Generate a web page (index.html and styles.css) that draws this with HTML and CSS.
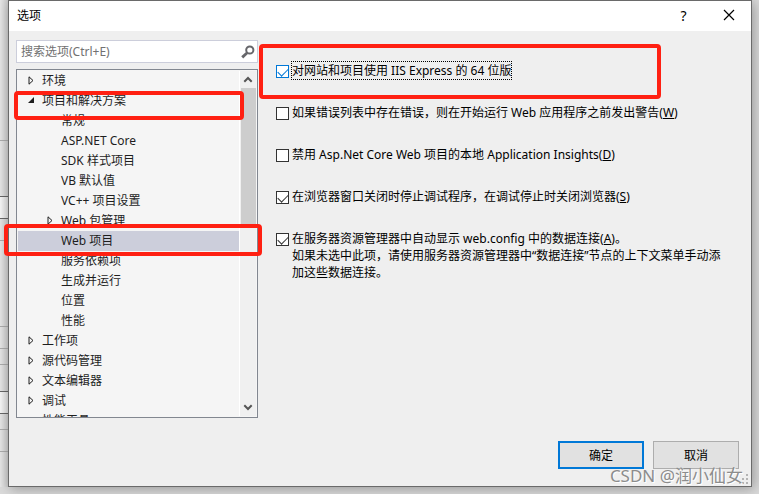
FILE: index.html
```html
<!DOCTYPE html>
<html lang="zh-CN">
<head>
  <meta charset="UTF-8">
  <title>选项</title>
  <meta name="viewport" content="width=device-width, initial-scale=1.0">
  <link rel="stylesheet" href="styles.css">
</head>
<body>

  <!-- edge of the window behind the dialog -->
  <div class="behind">
    <div class="strip strip-top"></div>
    <div class="strip strip-gap"></div>
    <div class="strip strip-field"></div>
    <div class="strip strip-row"></div>
    <div class="strip strip-tall"></div>
    <div class="strip strip-row"></div>
    <div class="strip strip-small"></div>
    <div class="strip strip-low"></div>
    <div class="strip strip-field"></div>
    <div class="strip strip-small"></div>
    <div class="strip strip-row"></div>
  </div>

  <div class="dialog" role="dialog" aria-labelledby="title">
    <header class="title-bar">
      <h1 id="title">选项</h1>
      <button type="button" class="title-btn">?</button>
      <button type="button" class="title-btn" aria-label="关闭">
        <svg width="12" height="12" viewBox="0 0 12 12"><path d="M1 1L11 11M11 1L1 11" stroke="#000" stroke-width="1.2" fill="none"/></svg>
      </button>
    </header>

    <div class="content">
      <div class="sidebar">
        <div class="search">
          <input type="text" placeholder="搜索选项(Ctrl+E)" aria-label="搜索选项">
          <svg width="14" height="14" viewBox="0 0 14 14" fill="none" stroke="#66666a"><circle cx="8.8" cy="5" r="3.6" stroke-width="2"/><path d="M6.2 7.8L1.2 12.4" stroke-width="2.8"/></svg>
        </div>

        <div class="tree-box">
          <ul class="tree" role="tree">
            <li><svg class="arrow" viewBox="0 0 6 9"><path d="M1 .8V8.2L5 4.5Z"/></svg>环境</li>
            <li><svg class="arrow open" viewBox="0 0 6 6"><path d="M6 0V6H0Z"/></svg>项目和解决方案</li>
            <li class="child">常规</li>
            <li class="child">ASP.NET Core</li>
            <li class="child">SDK 样式项目</li>
            <li class="child">VB 默认值</li>
            <li class="child">VC++ 项目设置</li>
            <li class="child"><svg class="arrow" viewBox="0 0 6 9"><path d="M1 .8V8.2L5 4.5Z"/></svg>Web 包管理</li>
            <li class="child selected">Web 项目</li>
            <li class="child">服务依赖项</li>
            <li class="child">生成并运行</li>
            <li class="child">位置</li>
            <li class="child">性能</li>
            <li><svg class="arrow" viewBox="0 0 6 9"><path d="M1 .8V8.2L5 4.5Z"/></svg>工作项</li>
            <li><svg class="arrow" viewBox="0 0 6 9"><path d="M1 .8V8.2L5 4.5Z"/></svg>源代码管理</li>
            <li><svg class="arrow" viewBox="0 0 6 9"><path d="M1 .8V8.2L5 4.5Z"/></svg>文本编辑器</li>
            <li><svg class="arrow" viewBox="0 0 6 9"><path d="M1 .8V8.2L5 4.5Z"/></svg>调试</li>
            <li>性能工具</li>
          </ul>
          <div class="scrollbar">
            <svg width="10" height="7" viewBox="0 0 10 7"><path d="M1.3 5.7L5 2L8.7 5.7"/></svg>
            <div class="thumb"></div>
            <svg width="10" height="7" viewBox="0 0 10 7"><path d="M1.3 1.3L5 5L8.7 1.3"/></svg>
          </div>
        </div>
      </div>

      <form class="options">
        <div class="option">
          <input type="checkbox" id="iis" class="focused" checked>
          <label for="iis" class="focus">对网站和项目使用 IIS Express 的 64 位版</label>
        </div>
        <div class="option">
          <input type="checkbox" id="warn">
          <label for="warn">如果错误列表中存在错误，则在开始运行 Web 应用程序之前发出警告(<u>W</u>)</label>
        </div>
        <div class="option">
          <input type="checkbox" id="insights">
          <label for="insights">禁用 Asp.Net Core Web 项目的本地 Application Insights(<u>D</u>)</label>
        </div>
        <div class="option">
          <input type="checkbox" id="stop" checked>
          <label for="stop">在浏览器窗口关闭时停止调试程序，在调试停止时关闭浏览器(<u>S</u>)</label>
        </div>
        <div class="option">
          <input type="checkbox" id="data" checked>
          <label for="data">在服务器资源管理器中自动显示 web.config 中的数据连接(<u>A</u>)。<br>如果未选中此项，请使用服务器资源管理器中“数据连接”节点的上下文菜单手动添加这些数据连接。</label>
        </div>
      </form>
    </div>

    <footer class="actions">
      <button type="button" class="btn primary">确定</button>
      <button type="button" class="btn">取消</button>
    </footer>

    <svg class="grip" width="10" height="10" viewBox="0 0 10 10" fill="#b4b4b4"><path d="M7 0h2v2h-2zM7 4h2v2h-2zM3 4h2v2h-2zM7 8h2v2h-2zM3 8h2v2h-2zM0 8h1v2h-1z"/></svg>

    <!-- red highlight boxes -->
    <div class="mark mark-group"></div>
    <div class="mark mark-page"></div>
    <div class="mark mark-option"></div>
    <div class="watermark">CSDN @润小仙女</div>
  </div>

</body>
</html>
```

FILE: styles.css
```css
* {
  margin: 0;
  padding: 0;
  box-sizing: border-box;
}

body {
  display: flex;
  min-height: 100vh;
  padding-right: 7px;
  padding-bottom: 7px;
  background-color: #dadada;
  font-family: "Noto Sans", "Noto Sans CJK SC", sans-serif;
  font-size: 12px;
  line-height: 17px;
  color: #000;
}

button, input {
  font: inherit;
  color: inherit;
}

.behind {
  width: 8px;
  flex-shrink: 0;
  background: linear-gradient(to right, #e6e6e6, #cacaca);
}

.strip {
  border-bottom: 1px solid #aaa;
}

.strip-top { height: 141px; }
.strip-gap { height: 56px; border-color: #666; }
.strip-field { height: 22px; border-color: #666; background: linear-gradient(to right, #f6f6f6, #dadada); }
.strip-row { height: 22px; }
.strip-tall { height: 86px; }
.strip-small { height: 16px; }
.strip-low { height: 27px; border-color: #666; }

.dialog {
  position: relative;
  flex: 1;
  display: flex;
  flex-direction: column;
  border: 1px solid #6a6a6a;
  background-color: #efefef;
  box-shadow: 2px 2px 12px rgba(0, 0, 0, 0.3);
}

.title-bar {
  display: flex;
  align-items: center;
  height: 30px;
  padding-left: 8px;
  padding-bottom: 2px;
  background-color: #fff;
}

.title-bar h1 {
  flex: 1;
  font-size: 12px;
  font-weight: normal;
}

.title-btn {
  display: flex;
  align-items: center;
  justify-content: center;
  width: 45px;
  height: 28px;
  border: none;
  background: none;
  font-size: 14px;
}

.content {
  display: flex;
  gap: 18px;
  padding: 9px 24px 0 7px;
}

.sidebar {
  width: 242px;
  flex-shrink: 0;
}

.search {
  display: flex;
  align-items: center;
  height: 23px;
  padding: 0 2px 0 4px;
  border: 1px solid #cccedb;
  background-color: #fff;
}

.search input {
  flex: 1;
  min-width: 0;
  border: none;
  outline: none;
  background: none;
}

.search input::placeholder {
  color: #717171;
}

.tree-box {
  display: flex;
  height: 349px;
  margin-top: 6px;
  padding: 1px;
  border: 1px solid #828790;
  background-color: #f5f5f5;
  overflow: hidden;
}

.tree {
  flex: 1;
  list-style: none;
  color: #1e1e1e;
}

.tree li {
  display: flex;
  align-items: center;
  height: 20px;
  padding-left: 24px;
  padding-bottom: 2px;
}

.tree .child {
  padding-left: 43px;
}

.tree .selected {
  background-color: #cccedb;
}

.arrow {
  width: 6px;
  height: 9px;
  margin-left: -14px;
  margin-right: 8px;
  fill: none;
  stroke: #1e1e1e;
}

.arrow.open {
  height: 6px;
  fill: #1e1e1e;
  stroke: none;
}

.scrollbar {
  display: flex;
  flex-direction: column;
  align-items: center;
  width: 17px;
  padding: 5px 0;
  border-left: 1px solid #fff;
  background-color: #f0f0f0;
}

.scrollbar svg {
  fill: none;
  stroke: #555;
  stroke-width: 2;
}

.thumb {
  width: 15px;
  height: 139px;
  margin-top: 5px;
  margin-bottom: auto;
  background-color: #cdcdcd;
}

.options {
  flex: 1;
  display: flex;
  flex-direction: column;
  gap: 25px;
  padding-top: 22px;
}

.option {
  display: flex;
  align-items: flex-start;
  gap: 3px;
}

.option input {
  appearance: none;
  position: relative;
  width: 13px;
  height: 13px;
  flex-shrink: 0;
  margin-top: 3px;
  border: 1px solid #333;
  background-color: #fff;
  color: #333;
}

/* tick */
.option input:checked::after {
  content: "";
  position: absolute;
  top: 2px;
  left: 1px;
  width: 9px;
  height: 5px;
  border-left: 1px solid;
  border-bottom: 1px solid;
  transform: rotate(-45deg);
}

.option .focused {
  border-color: #0078d7;
  color: #0078d7;
}

.focus {
  outline: 1px dotted #000;
}

.actions {
  display: flex;
  justify-content: flex-end;
  gap: 9px;
  margin-top: auto;
  padding: 0 12px 17px;
}

.btn {
  width: 86px;
  height: 28px;
  border: 1px solid #adadad;
  background-color: #e1e1e1;
}

.btn.primary {
  border: 2px solid #0078d7;
}

.grip {
  position: absolute;
  right: 2px;
  bottom: 2px;
}

.mark {
  position: absolute;
  border: 4px solid #ff2012;
  border-radius: 4px;
}

.mark-group {
  top: 90px;
  left: 5px;
  width: 230px;
  height: 29px;
}

.mark-page {
  top: 223px;
  left: -5px;
  width: 258px;
  height: 32px;
}

.mark-option {
  top: 43px;
  left: 250px;
  width: 402px;
  height: 55px;
}

.watermark {
  position: absolute;
  right: 8px;
  bottom: 0;
  font-size: 17px;
  line-height: 20px;
  color: #8c8c8c;
  text-shadow: 1px 1px 0 #fff;
}
```
